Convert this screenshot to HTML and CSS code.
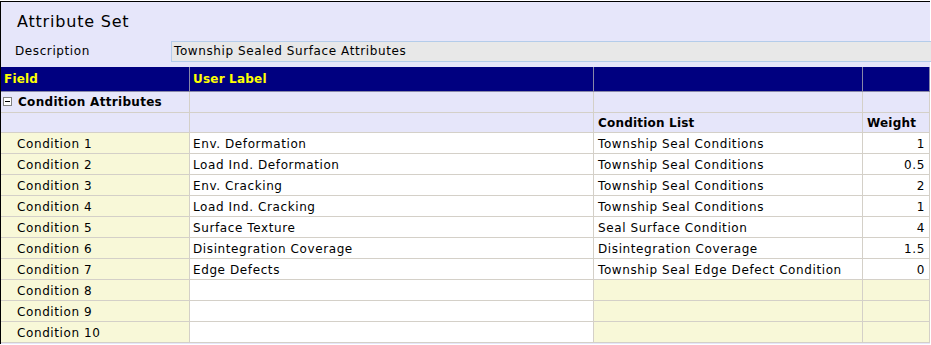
FILE: index.html
```html
<!DOCTYPE html>
<html>
<head>
<meta charset="utf-8">
<link rel="stylesheet" href="styles.css">
</head>
<body>
<div class="panel">
  <div class="title">Attribute Set</div>
  <div class="desc-row">
    <div class="desc-label">Description</div>
    <div class="desc-box">Township Sealed Surface Attributes</div>
  </div>
  <table class="grid">
    <colgroup>
      <col class="c1"><col class="c2"><col class="c3"><col class="c4">
    </colgroup>
    <tr class="head">
      <th>Field</th><th>User Label</th><th></th><th></th>
    </tr>
    <tr class="group">
      <td><span class="group-label"><svg class="toggle" width="9" height="9" viewBox="0 0 9 9"><rect x="0.5" y="0.5" width="8" height="8" fill="#fff" stroke="#808080"/><line x1="2" y1="4.5" x2="7" y2="4.5" stroke="#000"/></svg>Condition Attributes</span></td><td></td><td></td><td></td>
    </tr>
    <tr class="sub">
      <td></td><td></td><td class="b">Condition List</td><td class="b">Weight</td>
    </tr>
    <tr class="data"><td class="f">Condition 1</td><td>Env. Deformation</td><td>Township Seal Conditions</td><td class="num">1</td></tr>
    <tr class="data"><td class="f">Condition 2</td><td>Load Ind. Deformation</td><td>Township Seal Conditions</td><td class="num">0.5</td></tr>
    <tr class="data"><td class="f">Condition 3</td><td>Env. Cracking</td><td>Township Seal Conditions</td><td class="num">2</td></tr>
    <tr class="data"><td class="f">Condition 4</td><td>Load Ind. Cracking</td><td>Township Seal Conditions</td><td class="num">1</td></tr>
    <tr class="data"><td class="f">Condition 5</td><td>Surface Texture</td><td>Seal Surface Condition</td><td class="num">4</td></tr>
    <tr class="data"><td class="f">Condition 6</td><td>Disintegration Coverage</td><td>Disintegration Coverage</td><td class="num">1.5</td></tr>
    <tr class="data"><td class="f">Condition 7</td><td>Edge Defects</td><td>Township Seal Edge Defect Condition</td><td class="num">0</td></tr>
    <tr class="data"><td class="f">Condition 8</td><td></td><td class="y"></td><td class="y num"></td></tr>
    <tr class="data"><td class="f">Condition 9</td><td></td><td class="y"></td><td class="y num"></td></tr>
    <tr class="data"><td class="f">Condition 10</td><td></td><td class="y"></td><td class="y num"></td></tr>
  </table>
</div>
</body>
</html>
```

FILE: styles.css
```css
html, body {
  margin: 0;
  padding: 0;
  background: #ffffff;
}
body {
  font-family: "DejaVu Sans", Verdana, sans-serif;
  font-size: 12px;
  letter-spacing: 0.6px;
  color: #000;
}
.panel {
  margin-top: 1px;
  border-top: 1px solid #000;
  border-left: 1px solid #000;
  background: #E6E6FA;
  height: 343px;
  width: 930px;
  box-sizing: border-box;
}
.title {
  font-size: 16px;
  letter-spacing: 0.8px;
  height: 36px;
  padding-top: 2px;
  line-height: 36px;
  padding-left: 16px;
}
.desc-row {
  display: flex;
  align-items: center;
  height: 23px;
}
.desc-label {
  width: 156px;
  padding-left: 14px;
  margin-top: -2px;
}
.desc-box {
  flex: 1;
  height: 19px;
  line-height: 19px;
  background: #E8E8E8;
  border-top: 1px solid #B4CCEA;
  border-bottom: 1px solid #B4CCEA;
  border-left: 1px solid #B4CCEA;
  padding-left: 2px;
  margin-right: -1px;
}
.grid {
  margin-top: 4px;
  border-collapse: separate;
  border-spacing: 0;
  table-layout: fixed;
  width: 929px;
}
.c1 { width: 189px; }
.c2 { width: 404px; }
.c3 { width: 269px; }
.c4 { width: 67px; }
.grid th, .grid td {
  padding: 0 0 0 3px;
  border-right: 1px solid #D4D0C8;
  border-bottom: 1px solid #D4D0C8;
  white-space: nowrap;
  overflow: hidden;
  text-align: left;
  font-weight: normal;
}
.head th {
  background: #000080;
  color: #FFFF00;
  font-weight: bold;
  letter-spacing: 0.2px;
  height: 24px;
  border-right: 1px solid #8888A8;
  border-bottom: 1px solid #8888A8;
}
.group td {
  height: 20px;
  font-weight: bold;
  letter-spacing: 0.3px;
}
.group-label {
  display: inline-flex;
  align-items: center;
  gap: 6px;
  margin-left: -1px;
}
.toggle {
  display: block;
}
.sub td {
  height: 19px;
}
.sub td.b {
  font-weight: bold;
  letter-spacing: 0.2px;
  padding-left: 4px;
}
.data td {
  height: 19px;
  padding-top: 1px;
  background: #ffffff;
}
.data td.f {
  background: #F8F8D8;
  padding-left: 16px;
}
.data td.y {
  background: #F8F8D8;
}
.data td:nth-child(3) {
  padding-left: 4px;
}
.data td.num {
  text-align: right;
  padding: 1px 4px 0 0;
}
```
